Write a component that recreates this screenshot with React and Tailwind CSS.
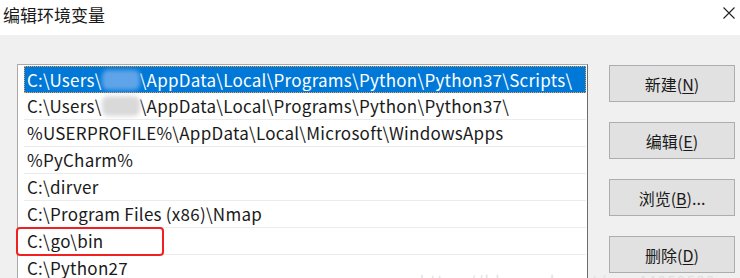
import React from "react";

const font = { fontFamily: '"Noto Sans CJK SC", "Noto Sans", sans-serif' };

const rows = [
  { pre: "C:\\Users\\", blur: true, post: "\\AppData\\Local\\Programs\\Python\\Python37\\Scripts\\", sel: true },
  { pre: "C:\\Users\\", blur: true, post: "\\AppData\\Local\\Programs\\Python\\Python37\\" },
  { pre: "%USERPROFILE%\\AppData\\Local\\Microsoft\\WindowsApps" },
  { pre: "%PyCharm%" },
  { pre: "C:\\dirver" },
  { pre: "C:\\Program Files (x86)\\Nmap" },
  { pre: "C:\\go\\bin", box: true },
  { pre: "C:\\Python27" },
];

function Btn({ label, k, suffix = "" }) {
  return (
    <div className="h-[37px] w-[126px] border border-[#adadad] bg-[#e1e1e1] flex items-center justify-center text-[16px] text-[#1a1a1a]">
      {label}(<span className="underline underline-offset-2">{k}</span>){suffix}
    </div>
  );
}

export default function App() {
  return (
    <div className="w-[740px] h-[278px] overflow-hidden relative bg-[#f0f0f0]" style={font}>
      <div className="h-[35px] bg-white flex items-center justify-between pl-[3px] pr-[4px]">
        <span className="text-[17px] text-[#1a1a1a] leading-none -mt-[6px]">编辑环境变量</span>
        <svg width="12" height="12" viewBox="0 0 12 12" className="mr-[1px] -mt-[10px]">
          <path d="M0.5 0.5 L11.5 11.5 M11.5 0.5 L0.5 11.5" stroke="#222" strokeWidth="1.1" fill="none" />
        </svg>
      </div>
      <div className="flex pl-[17px] pt-[29px]">
        <div className="w-[571px] h-[240px] bg-white border border-[#a9a9a9] border-r-[#6d6d6d] pl-[6px] pr-[1px] pt-[1px]">
          {rows.map((r, i) => (
            <div
              key={i}
              className={
                "h-[27px] flex items-center pl-[3px] text-[17px] tracking-[0.25px] whitespace-nowrap relative " +
                (r.sel
                  ? "bg-[#0078d7] text-white outline-1 outline-dotted outline-[#f0a040] -outline-offset-1"
                  : "text-[#1a1a1a] border-b border-[#ececec]")
              }
            >
              <span>{r.pre}</span>
              {r.blur && (
                <span
                  className={
                    "inline-block w-[38px] h-[20px] rounded-[6px] blur-[2px] " +
                    (r.sel ? "bg-[#5fa4e8]" : "bg-[#d9d9d9]")
                  }
                />
              )}
              {r.post && <span>{r.post}</span>}
              {r.box && (
                <div className="absolute left-[-8px] top-[-1px] w-[148px] h-[29px] border-[2.5px] border-[#f02020] rounded-[4px]" />
              )}
            </div>
          ))}
        </div>
        <div className="ml-[21px] pt-[1px] flex flex-col gap-[20px]">
          <Btn label="新建" k="N" />
          <Btn label="编辑" k="E" />
          <Btn label="浏览" k="B" suffix="..." />
          <Btn label="删除" k="D" />
        </div>
      </div>
      <div className="absolute left-[420px] top-[270px] text-[14px] text-[#dedede] whitespace-nowrap tracking-[2px]">
        https://blog.csdn.net/qq_44859533
      </div>
    </div>
  );
}
